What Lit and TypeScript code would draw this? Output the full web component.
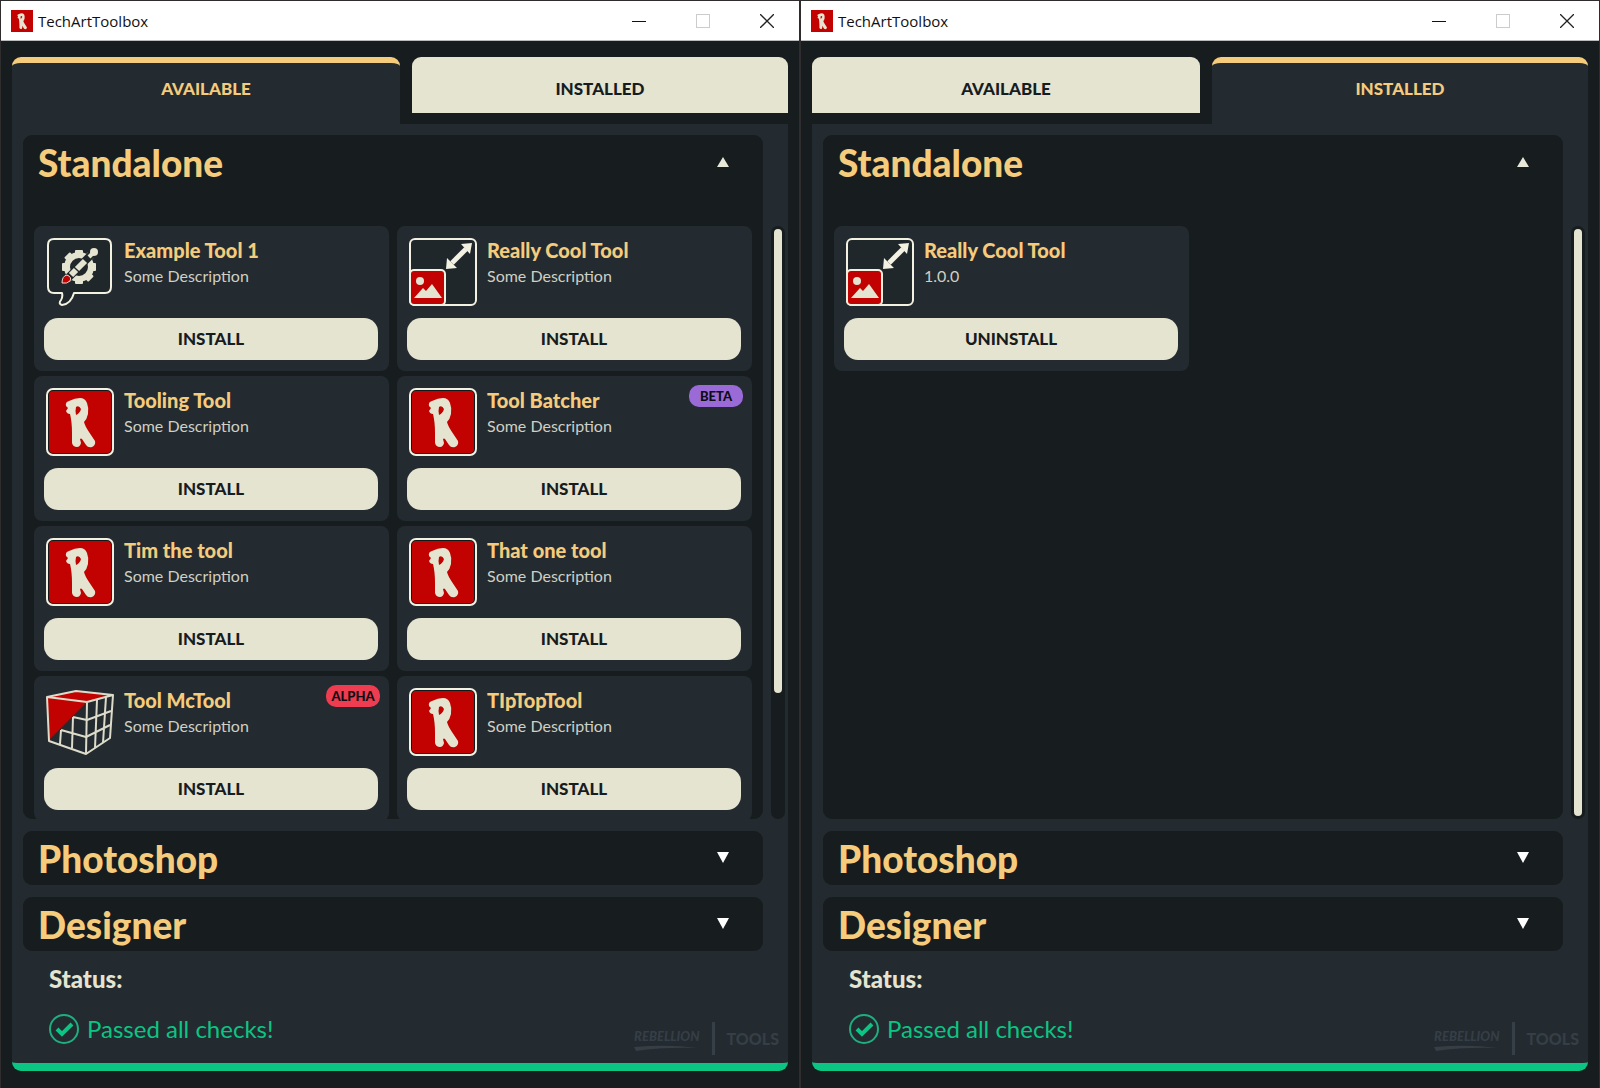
import { LitElement, html, css, svg, nothing } from "lit";
import { customElement, property } from "lit/decorators.js";

type IconName = "gear" | "resize" | "mark" | "cube";
interface Tool {
  name: string;
  detail: string;
  icon: IconName;
  badge?: "beta" | "alpha";
}

const some = "Some Description";
const availableTools: Tool[] = [
  { name: "Example Tool 1", detail: some, icon: "gear" },
  { name: "Really Cool Tool", detail: some, icon: "resize" },
  { name: "Tooling Tool", detail: some, icon: "mark" },
  { name: "Tool Batcher", detail: some, icon: "mark", badge: "beta" },
  { name: "Tim the tool", detail: some, icon: "mark" },
  { name: "That one tool", detail: some, icon: "mark" },
  { name: "Tool McTool", detail: some, icon: "cube", badge: "alpha" },
  { name: "TIpTopTool", detail: some, icon: "mark" },
];
const installedTools: Tool[] = [{ name: "Really Cool Tool", detail: "1.0.0", icon: "resize" }];

const brushMark = svg`
  <path fill="#e5e4d1" fill-rule="evenodd" d="M20 18Q19 14 23 13Q29 10 34 10Q39 10 41 15Q43 20 42 26Q41 31 38 34Q39 38 43 44L49 53Q50 57 46 59Q42 60 40 57L36 51Q35 50 34 51L35 55Q34 59 31 59Q27 59 26 55L26 45Q26 34 24 26Q21 26 20 23L22 20ZM30 19Q29 23 30 27Q34 25 35 21Q33 17 30 19Z"/>`;

const cogTeeth = [0, 45, 90, 135, 180, 225, 270, 315];

const icons: Record<IconName, unknown> = {
  mark: svg`
    <rect x="1" y="1" width="66" height="66" rx="6" fill="#14181b" stroke="#f3f1e2" stroke-width="2"/>
    <rect x="3" y="3" width="62" height="62" rx="4" fill="#c10200"/>
    ${brushMark}`,
  gear: svg`
    <path d="M8 1H59Q65 1 65 7V49Q65 55 59 55H28Q25 66 16 67Q12 66 15 62Q17 59 16 55H8Q2 55 2 49V7Q2 1 8 1Z" fill="#20272b" stroke="#f3f1e2" stroke-width="2" stroke-linejoin="round"/>
    <circle cx="33" cy="29" r="12" fill="none" stroke="#e5e4d1" stroke-width="6"/>
    ${cogTeeth.map((a) => svg`<rect x="29" y="12" width="8" height="6" rx="1" fill="#e5e4d1" transform="rotate(${a} 33 29)"/>`)}
    <path d="M18 44L47 15" stroke="#20272b" stroke-width="8"/>
    <circle cx="48" cy="14" r="4" fill="#e5e4d1"/>
    <path d="M43 19L47 15" stroke="#e5e4d1" stroke-width="4"/>
    <path d="M31 31L39 23" stroke="#e5e4d1" stroke-width="6"/>
    <path d="M25 37L30 32" stroke="#e5e4d1" stroke-width="6"/>
    <path d="M16 45Q16 38 21 37Q26 39 24 43Q21 46 16 45Z" fill="#c10200" stroke="#f0dcd0" stroke-width="1"/>`,
  resize: svg`
    <rect x="1" y="1" width="66" height="66" rx="5" fill="#20272b" stroke="#f3f1e2" stroke-width="2"/>
    <rect x="1" y="32" width="35" height="35" rx="4" fill="#c10200" stroke="#f3f1e2" stroke-width="2"/>
    <circle cx="11" cy="43" r="4" fill="#e5e4d1"/>
    <path d="M5 60L14 50L17 53L23 46L33 60Z" fill="#e5e4d1"/>
    <path d="M43 25L57 11" stroke="#f3f1e2" stroke-width="5"/>
    <path d="M63 5L61 16L52 6ZM37 31L38 20L48 30Z" fill="#f3f1e2"/>`,
  cube: svg`
    <path d="M1 9L30 3L67 7L41 14Z" fill="#c10200"/>
    <path d="M1 9L41 14L4 51Z" fill="#c10200"/>
    <g fill="none" stroke="#dddccb" stroke-width="2" stroke-linejoin="round">
      <path d="M1 9L30 3L67 7L41 14ZM1 9L3 53L40 66L64 50L67 7M41 14L40 66"/>
      <path d="M27 29L41 32L65 23M15 42L40 49L64 37M51 12L49 60M60 9L57 55M27 29L26 60M15 42L14 56"/>
    </g>`,
};

@customElement("tool-icon")
class ToolIcon extends LitElement {
  @property() name: IconName = "mark";
  static styles = css`
    :host { display: block; width: 68px; height: 68px; flex: none; }
    svg { display: block; overflow: visible; }
  `;
  render() {
    return html`<svg width="68" height="68" viewBox="0 0 68 68" aria-hidden="true">${icons[this.name]}</svg>`;
  }
}

@customElement("tool-card")
class ToolCard extends LitElement {
  @property({ attribute: false }) tool!: Tool;
  @property() action = "Install";
  static styles = css`
    :host { display: block; }
    .card {
      position: relative; box-sizing: border-box; height: 145px; padding: 12px 11px 11px 10px;
      background: #232a30; border-radius: 8px;
      display: flex; flex-direction: column; justify-content: space-between;
    }
    .head { display: flex; gap: 10px; padding-left: 2px; }
    h3 { margin: 0; font-size: 20px; line-height: 24px; font-weight: 900; color: #f5cb7c; }
    p { margin: 0; font-size: 16px; line-height: 28px; color: #cfd0c3; }
    button {
      height: 42px; border: 0; border-radius: 14px; background: #e5e4d1; color: #171c1f;
      font: 900 17px/24px Lato, sans-serif; text-transform: uppercase;
    }
    .badge {
      position: absolute; top: 9px; right: 9px; width: 54px; border-radius: 10px;
      font-size: 13px; line-height: 22px; font-weight: 900; text-align: center;
      text-transform: uppercase; color: #0d0d12;
    }
    .beta { background: #9a6ad6; }
    .alpha { background: #ee3c50; }
  `;
  render() {
    const { name, detail, icon, badge } = this.tool;
    return html`<article class="card">
      <div class="head">
        <tool-icon name=${icon}></tool-icon>
        <div><h3>${name}</h3><p>${detail}</p></div>
      </div>
      ${badge ? html`<span class="badge ${badge}">${badge}</span>` : nothing}
      <button type="button">${this.action}</button>
    </article>`;
  }
}

@customElement("toolbox-window")
class ToolboxWindow extends LitElement {
  @property() tab: "available" | "installed" = "available";
  @property({ attribute: false }) tools: Tool[] = [];
  @property({ type: Number }) thumb = 100;
  static styles = css`
    :host {
      display: flex; flex-direction: column; box-sizing: border-box; height: 100vh; min-width: 0;
      border: 1px solid #2e2c2c; border-bottom: 0; background: #171c1f;
    }
    button { font-family: inherit; border: 0; padding: 0; margin: 0; background: none; }
    .titlebar {
      display: flex; align-items: center; flex: none; height: 39px; padding-left: 10px;
      background: #fff; border-bottom: 1px solid #b9bbbc;
    }
    .title {
      flex: 1; margin: 0 0 0 5px; color: #111;
      font: 400 15px/24px "Open Sans", sans-serif;
    }
    .ctl { width: 64px; height: 39px; display: grid; place-items: center; }
    .body { flex: 1; min-height: 0; display: flex; flex-direction: column; padding: 16px 11px 17px; }
    .tabs { display: grid; grid-template-columns: 388fr 376fr; column-gap: 12px; flex: none; height: 67px; }
    .tab {
      height: 56px; border-radius: 9px 9px 0 0; background: #e5e4d1; color: #171c1f;
      font-size: 17px; line-height: 24px; font-weight: 900; text-transform: uppercase; padding-top: 8px;
    }
    .tab.on { height: 67px; padding-bottom: 9px; padding-top: 0; background: #232a30; color: #f5cb7c; border-top: 6px solid #f5cb7c; }
    .panel {
      flex: 1; min-height: 0; display: flex; flex-direction: column; gap: 12px;
      padding: 11px 3px 0 11px; background: #232a30;
      border-bottom: 8px solid #0bc583; border-radius: 0 0 9px 9px;
    }
    .row { display: grid; grid-template-columns: minmax(0, 1fr) 14px; column-gap: 8px; flex: none; }
    .row.open { flex: 1; min-height: 0; grid-template-rows: minmax(0, 1fr); }
    .group { background: #171c1f; border-radius: 9px; overflow: hidden; display: flex; flex-direction: column; }
    .summary {
      display: flex; justify-content: space-between; align-items: center; flex: none;
      width: 100%; height: 54px; padding: 2px 34px 0 15px; text-align: left;
      color: #f5cb7c; font-size: 37px; line-height: 48px; font-weight: 900;
    }
    .arrow { margin-bottom: 4px; }
    .list {
      flex: 1; min-height: 0; overflow: hidden; margin-top: 37px; padding: 0 11px;
      display: grid; grid-template-columns: 1fr 1fr; gap: 5px 8px; align-content: start;
    }
    .track { margin-top: 91px; padding: 3px; border-radius: 7px; background: #171c1f; }
    .thumb { border-radius: 4px; background: #e5e4d1; }
    .foot { flex: none; display: flex; justify-content: space-between; align-items: flex-end; height: 100px; padding: 0 6px 0 26px; }
    .status { align-self: flex-start; }
    h2 { margin: 0; font-size: 24px; line-height: 32px; font-weight: 900; color: #e5e4d1; }
    .ok { display: flex; align-items: center; gap: 8px; margin: 16px 0 0; font-size: 24px; line-height: 36px; color: #0bc583; }
    .brand { display: flex; align-items: center; gap: 12px; margin-bottom: 8px; color: #363e46; }
    .word { display: flex; flex-direction: column; font: italic 900 13px/18px Lato, sans-serif; }
    .bar { width: 3px; height: 33px; background: #363e46; }
    .tools { font-size: 16px; line-height: 24px; font-weight: 900; }
  `;

  private group(name: string, open: boolean) {
    return html`<section class="row ${open ? "open" : ""}">
      <div class="group">
        <button class="summary" type="button" aria-expanded=${open}>
          <span>${name}</span>
          <svg class="arrow" width="12" height="11" viewBox="0 0 12 11" aria-hidden="true">
            ${open ? svg`<path d="M6 1L12 11H0Z" fill="#e9e8d8"/>` : svg`<path d="M0 0H12L6 11Z" fill="#fff"/>`}
          </svg>
        </button>
        ${open
          ? html`<div class="list">
              ${this.tools.map(
                (t) => html`<tool-card .tool=${t} action=${this.tab === "available" ? "Install" : "Uninstall"}></tool-card>`
              )}
            </div>`
          : nothing}
      </div>
      ${open ? html`<div class="track"><div class="thumb" style="height:${this.thumb}%"></div></div>` : nothing}
    </section>`;
  }

  private tabButton(id: "available" | "installed") {
    const on = this.tab === id;
    return html`<button type="button" role="tab" aria-selected=${on} class="tab ${on ? "on" : ""}">${id}</button>`;
  }

  render() {
    return html`
      <header class="titlebar">
        <svg width="22" height="22" viewBox="0 0 68 68" aria-hidden="true">
          <rect width="68" height="68" fill="#c10200"/>${brushMark}
        </svg>
        <h1 class="title">TechArtToolbox</h1>
        <button class="ctl" type="button" aria-label="Minimize">
          <svg width="14" height="14"><path d="M0 7.5H14" stroke="#111"/></svg>
        </button>
        <button class="ctl" type="button" aria-label="Maximize" disabled>
          <svg width="14" height="14"><rect x=".5" y=".5" width="13" height="13" fill="none" stroke="#ccc"/></svg>
        </button>
        <button class="ctl" type="button" aria-label="Close">
          <svg width="14" height="14"><path d="M0 0L14 14M14 0L0 14" stroke="#222" stroke-width="1.3"/></svg>
        </button>
      </header>
      <main class="body">
        <div class="tabs" role="tablist">${this.tabButton("available")}${this.tabButton("installed")}</div>
        <div class="panel">
          ${this.group("Standalone", true)} ${this.group("Photoshop", false)} ${this.group("Designer", false)}
          <footer class="foot">
            <div class="status">
              <h2>Status:</h2>
              <p class="ok">
                <svg width="30" height="30" viewBox="0 0 30 30" aria-hidden="true">
                  <circle cx="15" cy="15" r="14" fill="none" stroke="#1fae80" stroke-width="2"/>
                  <path d="M8 15L13 20L23 10" fill="none" stroke="#0bc583" stroke-width="4"/>
                </svg>
                <span>Passed all checks!</span>
              </p>
            </div>
            <div class="brand">
              <span class="word">REBELLION
                <svg width="64" height="6" viewBox="0 0 64 6" aria-hidden="true"><path d="M0 2Q34 -1 64 3Q30 2 2 6Z" fill="#363e46"/></svg>
              </span>
              <span class="bar"></span>
              <span class="tools">TOOLS</span>
            </div>
          </footer>
        </div>
      </main>
    `;
  }
}

@customElement("app-root")
class AppRoot extends LitElement {
  static styles = css`
    :host { display: grid; grid-template-columns: 1fr 1fr; font-family: Lato, sans-serif; background: #171c1f; }
  `;
  render() {
    return html`
      <toolbox-window tab="available" .tools=${availableTools} .thumb=${79}></toolbox-window>
      <toolbox-window tab="installed" .tools=${installedTools} .thumb=${100}></toolbox-window>
    `;
  }
}
